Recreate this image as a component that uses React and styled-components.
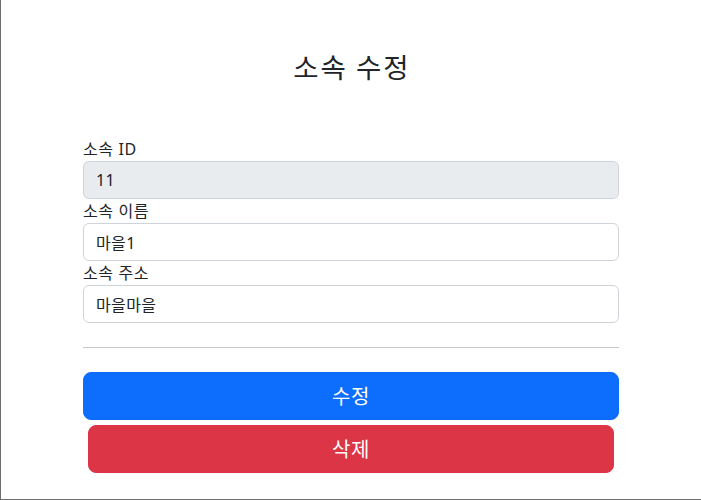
import React from "react";
import styled, { createGlobalStyle } from "styled-components";

const Global = createGlobalStyle`
  html, body { margin: 0; padding: 0; background: #fff; }
  body {
    font-family: "Noto Sans", "Noto Sans CJK KR", sans-serif;
    color: #212529;
  }
  * { box-sizing: border-box; }
`;

const Frame = styled.div`
  height: 500px;
  border-left: 1px solid #6e6e6e;
  border-bottom: 1px solid #6e6e6e;
  padding-top: 50px;
`;

const Container = styled.div`
  width: 536px;
  margin: 0 auto;
  display: flex;
  flex-direction: column;
`;

const Title = styled.h2`
  margin: 0 0 54px;
  font-size: 27.5px;
  font-weight: 400;
  line-height: 1.2;
  text-align: center;
  letter-spacing: 2px;
  text-indent: 2px;
  font-family: "Noto Sans CJK KR", "Noto Sans", sans-serif;
`;

const Field = styled.div`
  display: flex;
  flex-direction: column;
`;

const Label = styled.label`
  font-size: 16px;
  line-height: 24px;
  height: 24px;
  letter-spacing: 0.6px;
  font-family: "Noto Sans", "Noto Sans CJK KR", sans-serif;
`;

const Input = styled.input`
  height: 38px;
  padding: 6px 12px;
  font-size: 16px;
  line-height: 24px;
  letter-spacing: 0.4px;
  font-family: "Noto Sans", "Noto Sans CJK KR", sans-serif;
  color: #212529;
  background: ${(p) => (p.disabled ? "#e9ecef" : "#fff")};
  border: 1px solid #ced4da;
  border-radius: 6px;
  outline: none;
  width: 100%;
`;

const Rule = styled.hr`
  margin: 24px 0;
  border: 0;
  border-top: 1px solid #c8c9ca;
  height: 0;
`;

const Button = styled.button`
  height: 48px;
  padding: 8px 16px;
  font-size: 20px;
  line-height: 30px;
  letter-spacing: 0.5px;
  font-family: "Noto Sans CJK KR", "Noto Sans", sans-serif;
  color: #fff;
  border: 1px solid ${(p) => p.$bg};
  background: ${(p) => p.$bg};
  border-radius: 8px;
  cursor: pointer;
  margin: ${(p) => (p.$inset ? "5px 5px 0" : "0")};
`;

export default function App() {
  return (
    <>
      <Global />
      <Frame>
        <Container>
          <Title>소속 수정</Title>
          <Field>
            <Label>소속 ID</Label>
            <Input value="11" disabled readOnly />
          </Field>
          <Field>
            <Label>소속 이름</Label>
            <Input defaultValue="마을1" />
          </Field>
          <Field>
            <Label>소속 주소</Label>
            <Input defaultValue="마을마을" />
          </Field>
          <Rule />
          <Button $bg="#0d6efd">수정</Button>
          <Button $bg="#dc3545" $inset>삭제</Button>
        </Container>
      </Frame>
    </>
  );
}
